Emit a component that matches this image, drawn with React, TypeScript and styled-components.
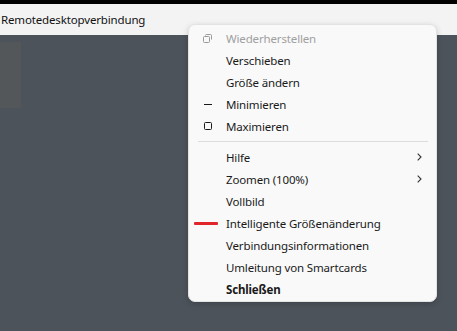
import styled, { createGlobalStyle } from 'styled-components';

const GlobalStyle = createGlobalStyle`
  html, body {
    margin: 0;
    padding: 0;
    background: #4c535a;
  }
  * { box-sizing: border-box; }
`;

type Item = {
  label: string;
  icon?: 'restore' | 'minimize' | 'maximize' | 'mark';
  disabled?: boolean;
  submenu?: boolean;
  bold?: boolean;
};

const topItems: Item[] = [
  { label: 'Wiederherstellen', icon: 'restore', disabled: true },
  { label: 'Verschieben' },
  { label: 'Größe ändern' },
  { label: 'Minimieren', icon: 'minimize' },
  { label: 'Maximieren', icon: 'maximize' },
];

const bottomItems: Item[] = [
  { label: 'Hilfe', submenu: true },
  { label: 'Zoomen (100%)', submenu: true },
  { label: 'Vollbild' },
  { label: 'Intelligente Größenänderung', icon: 'mark' },
  { label: 'Verbindungsinformationen' },
  { label: 'Umleitung von Smartcards' },
  { label: 'Schließen', bold: true },
];

function ItemIcon({ kind }: { kind?: Item['icon'] }) {
  if (kind === 'restore') {
    return (
      <svg width="9" height="9" viewBox="0 0 9 9">
        <rect x="0.5" y="2.5" width="6" height="6" rx="1" fill="none" stroke="#9a9a9a" />
        <path d="M2.5 1.5 Q2.5 0.5 3.5 0.5 H7.5 Q8.5 0.5 8.5 1.5 V5.5" fill="none" stroke="#9a9a9a" />
      </svg>
    );
  }
  if (kind === 'minimize') {
    return (
      <svg width="8" height="8" viewBox="0 0 8 8">
        <path d="M0 4.5 H8" stroke="#1a1a1a" strokeWidth="1" />
      </svg>
    );
  }
  if (kind === 'maximize') {
    return (
      <svg width="8" height="8" viewBox="0 0 8 8">
        <rect x="0.5" y="0.5" width="7" height="7" rx="1" fill="none" stroke="#1a1a1a" />
      </svg>
    );
  }
  if (kind === 'mark') {
    return <RedMark />;
  }
  return null;
}

export default function App() {
  return (
    <>
      <GlobalStyle />
      <Screen>
        <TopStrip />
        <TitleBar>Remotedesktopverbindung</TitleBar>
        <Desktop>
          <DesktopTile />
        </Desktop>

        <Menu>
          {topItems.map((it) => (
            <Row key={it.label} $disabled={it.disabled} $bold={it.bold}>
              <IconCell>
                <ItemIcon kind={it.icon} />
              </IconCell>
              <Label>{it.label}</Label>
            </Row>
          ))}
          <Separator />
          {bottomItems.map((it) => (
            <Row key={it.label} $disabled={it.disabled} $bold={it.bold}>
              <IconCell>
                <ItemIcon kind={it.icon} />
              </IconCell>
              <Label>{it.label}</Label>
              {it.submenu && (
                <Chevron width="5" height="8" viewBox="0 0 5 8">
                  <path d="M0.7 0.7 L4 4 L0.7 7.3" fill="none" stroke="#333" strokeWidth="1.1" />
                </Chevron>
              )}
            </Row>
          ))}
        </Menu>
      </Screen>
    </>
  );
}

const Screen = styled.div`
  position: relative;
  width: 457px;
  height: 331px;
  overflow: hidden;
  display: flex;
  flex-direction: column;
  background: #4c535a;
  font-family: 'Segoe UI', 'Noto Sans', 'Liberation Sans', sans-serif;
  font-size: 11.5px;
  letter-spacing: -0.15px;
`;

const TopStrip = styled.div`
  height: 4px;
  background: #000;
`;

const TitleBar = styled.div`
  height: 31px;
  display: flex;
  align-items: center;
  padding-left: 1px;
  background: #f3f3f3;
  color: #111;
`;

const Desktop = styled.div`
  flex: 1;
  padding-top: 7px;
`;

const DesktopTile = styled.div`
  width: 21px;
  height: 66px;
  background: #54575a;
`;

const Menu = styled.div`
  position: absolute;
  left: 188px;
  top: 24px;
  width: 249px;
  height: 278px;
  padding: 2px 0;
  background: #f9f9f9;
  border: 1px solid #e3e3e3;
  border-radius: 7px;
  box-shadow: 0 2px 6px rgba(0, 0, 0, 0.18);
`;

const Row = styled.div<{ $disabled?: boolean; $bold?: boolean }>`
  height: 22px;
  display: flex;
  align-items: center;
  padding-right: 14px;
  color: ${(p) => (p.$disabled ? '#a0a0a0' : '#1a1a1a')};
  font-weight: ${(p) => (p.$bold ? 700 : 400)};
`;

const IconCell = styled.div`
  width: 37px;
  display: flex;
  align-items: center;
  justify-content: center;
`;

const Label = styled.span`
  flex: 1;
  white-space: nowrap;
`;

const Chevron = styled.svg`
  display: block;
`;

const Separator = styled.div`
  height: 1px;
  margin: 4px 8px 4px 9px;
  background: #dcdcdc;
`;

const RedMark = styled.div`
  width: 24px;
  height: 3px;
  margin-right: 4px;
  border-radius: 1px;
  background: #e0252b;
`;
